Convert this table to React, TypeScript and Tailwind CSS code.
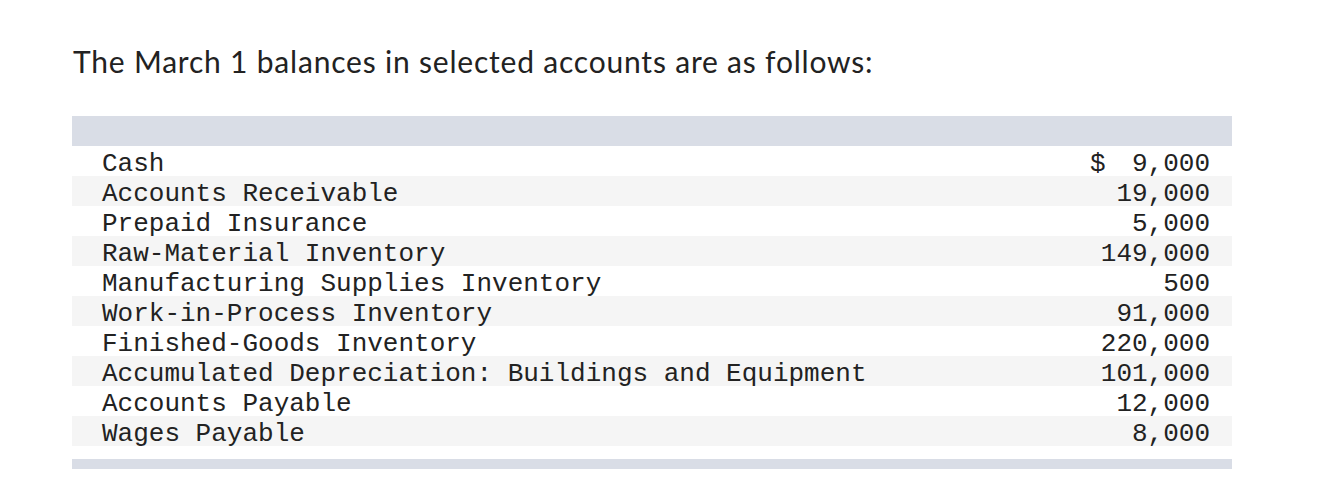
import React from "react";

const rows: [string, string, boolean][] = [
  ["Cash", "9,000", true],
  ["Accounts Receivable", "19,000", false],
  ["Prepaid Insurance", "5,000", false],
  ["Raw-Material Inventory", "149,000", false],
  ["Manufacturing Supplies Inventory", "500", false],
  ["Work-in-Process Inventory", "91,000", false],
  ["Finished-Goods Inventory", "220,000", false],
  ["Accumulated Depreciation: Buildings and Equipment", "101,000", false],
  ["Accounts Payable", "12,000", false],
  ["Wages Payable", "8,000", false],
];

export default function App() {
  return (
    <div className="w-[1334px] h-[502px] bg-white text-[#222] overflow-hidden">
      <div className="pt-[40px] pl-[73px]">
        <p className="text-[30px] leading-[42px] tracking-[0.8px] font-['Lato',sans-serif]">
          The March 1 balances in selected accounts are as follows:
        </p>
      </div>
      <div className="mt-[34px] ml-[72px] w-[1160px]">
        <div className="h-[30px] bg-[#d9dde6]" />
        <div className="font-['Liberation_Mono',monospace] text-[26px] leading-[30px]">
          {rows.map(([label, value, dollar], i) => (
            <div
              key={label}
              className={`flex h-[30px] pt-[3px] pl-[30px] pr-[22px] ${
                i % 2 === 1 ? "bg-[#f5f5f5]" : "bg-white"
              }`}
            >
              <span className="flex-1 whitespace-pre">{label}</span>
              <span className="w-[10px] whitespace-pre">{dollar ? "$" : ""}</span>
              <span className="w-[110px] text-right whitespace-pre">{value}</span>
            </div>
          ))}
        </div>
        <div className="mt-[13px] h-[10px] bg-[#d9dde6]" />
      </div>
    </div>
  );
}
